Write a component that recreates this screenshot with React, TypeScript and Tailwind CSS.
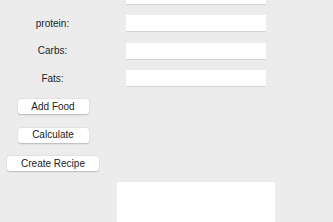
import React from 'react';

const fields = ['', 'protein:', 'Carbs:', 'Fats:'];
const actions = ['Add Food', 'Calculate', 'Create Recipe'];

const Field: React.FC<{ label: string }> = ({ label }) => (
  <div className="flex items-center h-[16px]">
    <div className="w-[105px] pt-[1px] text-center text-[10px] leading-none text-[#222]">{label}</div>
    <div className="ml-[21px] w-[140px] h-[16px] bg-white shadow-[0_1px_0_#d4d4d4]" />
  </div>
);

export default function App() {
  return (
    <div className="w-[333px] h-[222px] overflow-hidden bg-[#ececec] font-['Liberation_Sans',Arial,sans-serif]">
      <div className="flex flex-col gap-[11.5px] -mt-[12.5px]">
        {fields.map((f, i) => (
          <Field key={i} label={f} />
        ))}
      </div>
      <div className="flex flex-col gap-[13.5px] mt-[13px] w-[106px] items-center">
        {actions.map((a) => (
          <button
            key={a}
            className={`h-[15px] rounded-[3px] bg-white text-[10px] leading-none text-[#222] shadow-[0_0.5px_1.5px_rgba(0,0,0,0.22)] ${
              a === 'Create Recipe' ? 'w-[92px]' : 'w-[71px]'
            }`}
          >
            {a}
          </button>
        ))}
      </div>
      <div className="ml-[117px] mt-[11px] w-[158px] h-[60px] bg-white" />
    </div>
  );
}
